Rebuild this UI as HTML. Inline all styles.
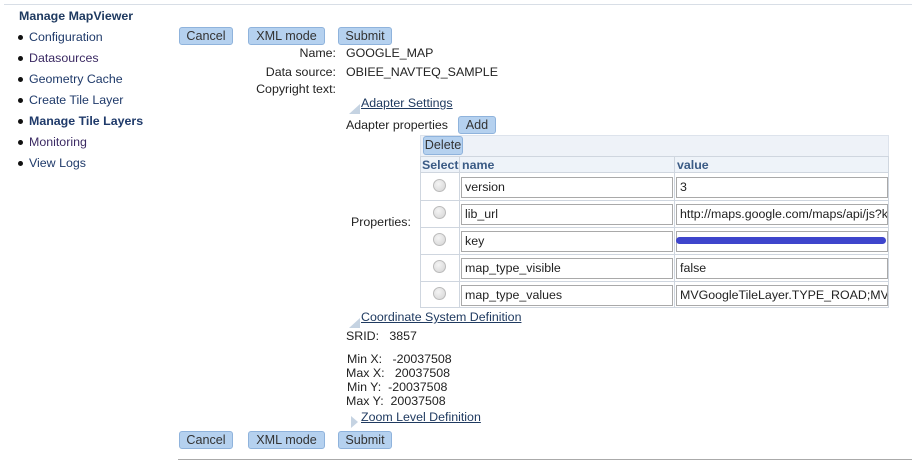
<!DOCTYPE html>
<html><head><meta charset="utf-8"><style>
*{margin:0;padding:0;box-sizing:border-box}
body{width:912px;height:469px;background:#fff;font-family:"Liberation Sans",Arial,sans-serif;font-size:12.4px;color:#222;position:relative;overflow:hidden}
.a{position:absolute;white-space:nowrap}
.btn{position:absolute;height:18px;background:#b5d1ef;border:1px solid #8fb3dc;border-radius:3px;color:#333;font-size:12.6px;text-align:center;line-height:16px}
.nav{color:#1f3a6a}
.bul{position:absolute;width:5px;height:5px;border-radius:50%;background:#111}
.lnk{color:#1f3a60;text-decoration:underline}
.tri{position:absolute;width:0;height:0;border-left:11px solid transparent;border-bottom:10px solid #c5d3e2}
.inp{position:absolute;height:21px;border:1px solid #a9a9a9;background:#fff;padding-left:3px;line-height:19px;overflow:hidden;white-space:nowrap;color:#222}
.rad{position:absolute;width:13px;height:13px;border-radius:50%;border:1px solid #bbb;background:radial-gradient(circle at 40% 35%,#f4f4f4,#d4d4d4)}
</style></head><body>
<div class="a" style="left:4px;top:4px;width:908px;height:1px;background:#d8dee6"></div>
<div class="a" style="left:19px;top:9px;font-weight:bold;color:#1f3a60">Manage MapViewer</div>
<div class="bul" style="left:18px;top:35px"></div><div class="a nav" style="left:29px;top:30px">Configuration</div>
<div class="bul" style="left:18px;top:56px"></div><div class="a nav" style="left:29px;top:51px;color:#3b2a63">Datasources</div>
<div class="bul" style="left:18px;top:77px"></div><div class="a nav" style="left:29px;top:72px">Geometry Cache</div>
<div class="bul" style="left:18px;top:98px"></div><div class="a nav" style="left:29px;top:93px">Create Tile Layer</div>
<div class="bul" style="left:18px;top:119px"></div><div class="a nav" style="left:29px;top:114px;font-weight:bold">Manage Tile Layers</div>
<div class="bul" style="left:18px;top:140px"></div><div class="a nav" style="left:29px;top:135px;color:#3b2a63">Monitoring</div>
<div class="bul" style="left:18px;top:161px"></div><div class="a nav" style="left:29px;top:156px">View Logs</div>

<div class="btn" style="left:179px;top:27px;width:54px">Cancel</div>
<div class="btn" style="left:248px;top:27px;width:77px">XML mode</div>
<div class="btn" style="left:338px;top:27px;width:54px">Submit</div>

<div class="a" style="left:200px;width:136px;text-align:right;top:46px">Name:</div>
<div class="a" style="left:346px;top:46px">GOOGLE_MAP</div>
<div class="a" style="left:200px;width:136px;text-align:right;top:65px">Data source:</div>
<div class="a" style="left:346px;top:65px">OBIEE_NAVTEQ_SAMPLE</div>
<div class="a" style="left:200px;width:136px;text-align:right;top:82px">Copyright text:</div>

<div class="tri" style="left:349px;top:104px"></div>
<div class="a lnk" style="left:361px;top:96px">Adapter Settings</div>
<div class="a" style="left:346px;top:118px">Adapter properties</div>
<div class="btn" style="left:458px;top:116px;width:38px">Add</div>

<div class="a" style="left:420px;top:135px;width:469px;height:173px;background:#eef2f8;border:1px solid #dde3ec"></div>
<div class="btn" style="left:423px;top:136px;width:40px;height:19px">Delete</div>
<div class="a" style="left:420px;top:156px;width:469px;height:152px;border:1px solid #cfd6df;background:#fff"></div>
<div class="a" style="left:420px;top:156px;width:469px;height:17px;background:#eef3f9;border:1px solid #cfd6df"></div>
<div class="a" style="left:422px;top:158px;font-weight:bold;color:#3b5b85">Select</div>
<div class="a" style="left:462px;top:158px;font-weight:bold;color:#3b5b85">name</div>
<div class="a" style="left:677px;top:158px;font-weight:bold;color:#3b5b85">value</div>
<div class="a" style="left:459px;top:156px;width:1px;height:152px;background:#cfd6df"></div>
<div class="a" style="left:674px;top:156px;width:1px;height:152px;background:#cfd6df"></div>
<div class="a" style="left:420px;top:200px;width:469px;height:1px;background:#cfd6df"></div>
<div class="a" style="left:420px;top:227px;width:469px;height:1px;background:#cfd6df"></div>
<div class="a" style="left:420px;top:254px;width:469px;height:1px;background:#cfd6df"></div>
<div class="a" style="left:420px;top:281px;width:469px;height:1px;background:#cfd6df"></div>

<div class="rad" style="left:433px;top:179px"></div>
<div class="inp" style="left:461px;top:177px;width:212px">version</div>
<div class="inp" style="left:676px;top:177px;width:212px">3</div>
<div class="rad" style="left:433px;top:206px"></div>
<div class="inp" style="left:461px;top:204px;width:212px">lib_url</div>
<div class="inp" style="left:676px;top:204px;width:212px">http://maps.google.com/maps/api/js?k</div>
<div class="rad" style="left:433px;top:233px"></div>
<div class="inp" style="left:461px;top:231px;width:212px">key</div>
<div class="inp" style="left:676px;top:231px;width:212px"></div>
<div class="a" style="left:676px;top:237px;width:210px;height:7px;background:#3e45cc;border-radius:4px"></div>
<div class="rad" style="left:433px;top:260px"></div>
<div class="inp" style="left:461px;top:258px;width:212px">map_type_visible</div>
<div class="inp" style="left:676px;top:258px;width:212px">false</div>
<div class="rad" style="left:433px;top:287px"></div>
<div class="inp" style="left:461px;top:285px;width:212px">map_type_values</div>
<div class="inp" style="left:676px;top:285px;width:212px">MVGoogleTileLayer.TYPE_ROAD;MV</div>

<div class="a" style="left:351px;top:215px">Properties:</div>

<div class="tri" style="left:349px;top:318px"></div>
<div class="a lnk" style="left:361px;top:310px">Coordinate System Definition</div>
<div class="a" style="left:346px;top:329px">SRID:&nbsp;&nbsp; 3857</div>
<div class="a" style="left:347px;top:352px">Min X:&nbsp;&nbsp; -20037508</div>
<div class="a" style="left:346px;top:366px">Max X:&nbsp;&nbsp; 20037508</div>
<div class="a" style="left:347px;top:380px">Min Y:&nbsp;&nbsp;-20037508</div>
<div class="a" style="left:346px;top:394px">Max Y:&nbsp;&nbsp;20037508</div>
<div class="a" style="left:351px;top:416px;width:0;height:0;border-top:6px solid transparent;border-bottom:6px solid transparent;border-left:7px solid #c5d3e2"></div>
<div class="a lnk" style="left:361px;top:410px">Zoom Level Definition</div>

<div class="btn" style="left:179px;top:431px;width:54px">Cancel</div>
<div class="btn" style="left:248px;top:431px;width:77px">XML mode</div>
<div class="btn" style="left:338px;top:431px;width:54px">Submit</div>
<div class="a" style="left:178px;top:459px;width:734px;height:1px;background:#aaa"></div>
</body></html>
